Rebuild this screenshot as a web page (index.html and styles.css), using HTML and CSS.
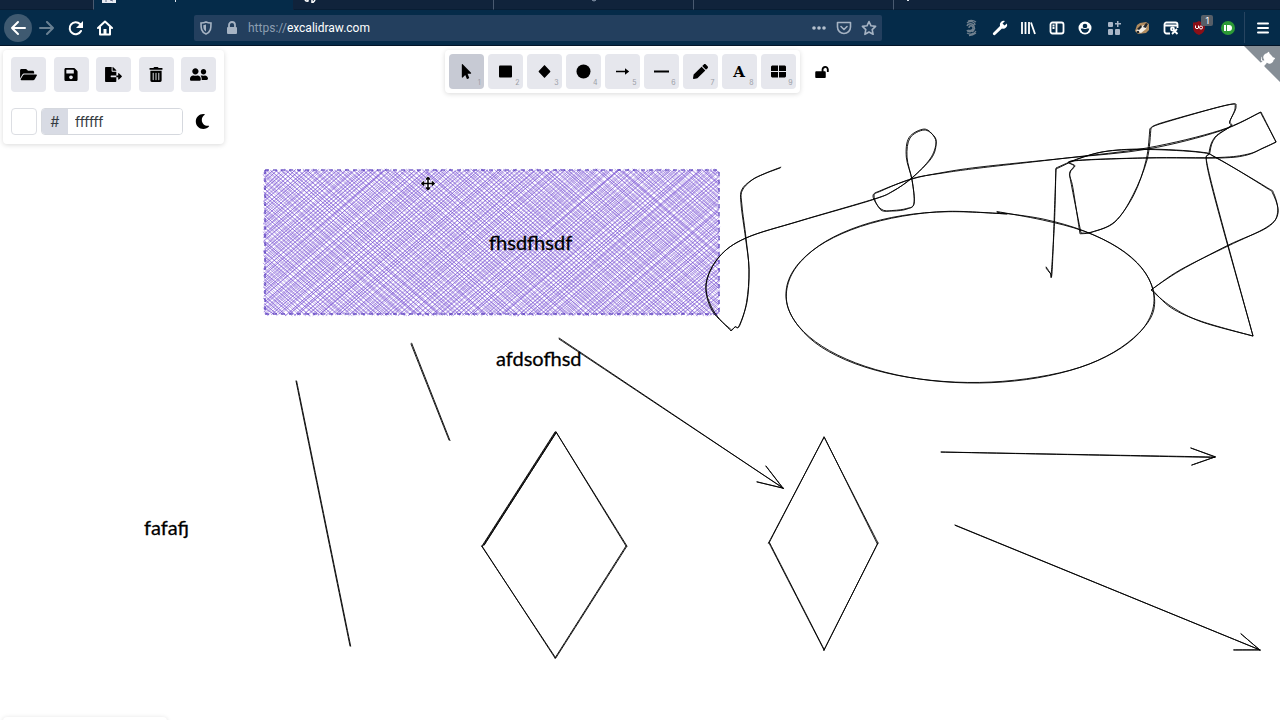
FILE: index.html
```
<!DOCTYPE html>
<html lang="en">
<head>
    <meta charset="UTF-8">
    <meta name="viewport" content="width=device-width, initial-scale=1.0">
    <title>Excalidraw</title>
    <link rel="stylesheet" href="styles.css">
</head>
<body>

<div class="browser">
    <div class="tabs">
        <div class="tab tab-first"></div>
        <div class="tab tab-active">
            <svg class="favicon" width="16" height="3" viewBox="0 0 16 3"><path fill="#e8ebf2" d="M1 0h14v3H1z"/><path stroke="#66708a" d="M4 1h2M9 0l3 1"/></svg>
            <svg class="tab-mark" width="2" height="3" viewBox="0 0 2 3"><path fill="#dfe6ee" d="M0 0h1v2H0z"/></svg>
        </div>
        <div class="tab"><svg class="tab-icon" width="14" height="3" viewBox="0 0 14 3"><path d="M2 0q1 1.500 3 1V0M9 0v3q2-1 3-3" fill="none" stroke="#fff" stroke-width="1.500"/></svg></div>
        <div class="tab tab-dot"><svg width="6" height="3" viewBox="0 0 6 3"><path d="M1 0q2 2 4 0" fill="none" stroke="#8fa0b5" stroke-width="1"/></svg></div>
        <div class="tab"></div>
        <div class="tab tab-last"><svg class="tab-icon" width="6" height="3" viewBox="0 0 6 3"><path fill="#dfe6ee" d="M4 0h2v1H4z"/></svg></div>
    </div>
    <nav class="navbar">
        <div class="nav-buttons">
            <button class="nav-button back" aria-label="Back"><svg width="16" height="16" viewBox="0 0 16 16"><path d="M15 8H2M8 2L2 8l6 6"/></svg></button>
            <button class="nav-button forward" aria-label="Forward"><svg width="16" height="16" viewBox="0 0 16 16"><path d="M1 8h13M8 2l6 6-6 6"/></svg></button>
            <button class="nav-button" aria-label="Reload"><svg width="16" height="16" viewBox="0 0 16 16"><path d="M13 11A6 6 0 1 1 12 4l1 1"/><path class="solid" d="M15 1v7H8z"/></svg></button>
            <button class="nav-button" aria-label="Home"><svg width="16" height="16" viewBox="0 0 16 16"><path d="M1 8l7-6.500L15 8M3 7v7.500h10V7"/><path class="solid" d="M6.500 9h3v5h-3z"/></svg></button>
        </div>
        <div class="address">
            <svg width="14" height="14" viewBox="0 0 14 14"><path d="M7 1C5 2 3 2 2 2c0 5 0 9 5 11 5-2 5-6 5-11-1 0-3 0-5-1z" fill="none" stroke="#a6b3c3" stroke-width="1.600"/><path d="M7 3.500v7C4.500 9 4.300 7 4.300 4.200z" fill="#a6b3c3"/></svg>
            <svg width="14" height="14" viewBox="0 0 14 14"><path d="M4 6V4a3 3 0 0 1 6 0v2" fill="none" stroke="#a6b3c3" stroke-width="1.800"/><rect x="2" y="6" width="10" height="7" rx="1" fill="#a6b3c3"/></svg>
            <span class="url"><span class="scheme">https://</span>excalidraw.com</span>
            <svg width="16" height="16" viewBox="0 0 16 16" fill="#b4c0ce"><circle cx="3" cy="8" r="1.800"/><circle cx="8" cy="8" r="1.800"/><circle cx="13" cy="8" r="1.800"/></svg>
            <svg width="16" height="16" viewBox="0 0 16 16" fill="none" stroke="#a6b3c3" stroke-width="1.600" stroke-linejoin="round"><path d="M1.500 2.500h13V7a6.500 6.500 0 0 1-13 0z"/><path d="M5 6.500l3 3 3-3" stroke-linecap="round"/></svg>
            <svg width="16" height="16" viewBox="0 0 16 16" fill="none" stroke="#a6b3c3" stroke-width="1.600" stroke-linejoin="round"><path d="M8 1.500l2 4.300 4.600.600-3.400 3.200.900 4.700L8 12l-4.100 2.300.900-4.700L1.400 6.400 6 5.800z"/></svg>
        </div>
        <div class="extensions">
            <svg viewBox="0 0 20 20" fill="none" stroke="#71818f" stroke-width="1.300"><path d="M6 5c3-3 8-1 8 2M6 8c1-3 6-3 7 0s0 5-2 6M8 10c0-3 4-3 4 0 0 2-3 3-5 2M6 12c1 3 6 2 8-2M6 15c3 2 7 1 9-2M8 17.500c3 0 5-1 7-2.500M7 3c3-1 6-.5 8 1"/></svg>
            <svg viewBox="0 0 20 20"><path fill="#fff" d="M3 15l7-7a4 4 0 0 1 5-5l-2.500 2.500 2 2L17 5.500a4 4 0 0 1-5 5l-7 6.500a1.500 1.500 0 0 1-2-2z"/></svg>
            <svg viewBox="0 0 20 20" stroke="#fff" stroke-width="1.800"><path d="M4 4v12M7.500 4v12M11 4v12M13 4.500l4 11.500"/></svg>
            <svg viewBox="0 0 20 20" fill="none" stroke="#fff" stroke-width="1.800"><rect x="3.500" y="4.500" width="13" height="11" rx="2"/><path d="M9.500 4.500v11M5.500 7.500h2M5.500 10h2"/></svg>
            <svg viewBox="0 0 20 20"><circle cx="10" cy="10" r="6.500" fill="#fff"/><circle cx="10" cy="8" r="2.300" fill="#052b49"/><path d="M5.800 10.500h8.400a4.200 4.200 0 0 1-8.400 0z" fill="#052b49"/><path d="M8 10a2.600 2.600 0 0 0 4 0" fill="#fff"/></svg>
            <svg viewBox="0 0 20 20" fill="#a9b6c7"><rect x="4" y="4" width="5" height="5" rx="1"/><rect x="4" y="11" width="5" height="6" rx="1"/><rect x="11" y="11" width="5" height="6" rx="1"/><path d="M13 3h1.500v2H17v1.500h-2.500V9H13V6.500h-2V5h2z"/></svg>
            <svg viewBox="0 0 20 20"><path fill="#b08b5f" d="M3 13l2-6 3-2 6-1 3 2v6l-3 3-8 1z"/><path fill="#f4efe6" d="M4 13l5-5 7-2-2 5-5 4z"/><path d="M5 11l4-4 1 2-3 3zM11 9l3-4 2 1-2 4z" fill="#20242a"/><circle cx="6" cy="14" r="1.200" fill="#20242a"/></svg>
            <svg viewBox="0 0 20 20" fill="none" stroke="#fff" stroke-width="1.800"><path d="M9 15.500H5.500a2 2 0 0 1-2-2v-7a2 2 0 0 1 2-2h9a2 2 0 0 1 2 2V10M3.500 7.500h13"/><circle cx="11.500" cy="11" r="1.500"/><path d="M12.500 12l4 4M11 16l5-5"/></svg>
            <span class="blocker">
                <svg viewBox="0 0 20 20"><path fill="#8b0f17" d="M10 3c-2 1.500-4 1.500-6 1.500V9c0 4 2 6.500 6 8 4-1.500 6-4 6-8V4.500C14 4.500 12 4.500 10 3z"/><path d="M6.500 7.500v2.500q1.500 1.500 3 0V7.500" fill="none" stroke="#fff"/><circle cx="12" cy="9.500" r="1.500" fill="none" stroke="#fff"/></svg>
                <span class="badge">1</span>
            </span>
            <svg viewBox="0 0 20 20"><circle cx="10" cy="10" r="7" fill="#2c9a36"/><path fill="#fff" d="M6 7h2v6H6zM9 7h2a3 3 0 0 1 0 6H9z"/></svg>
        </div>
        <div class="divider"></div>
        <button class="nav-button menu" aria-label="Menu"><svg width="16" height="16" viewBox="0 0 16 16"><path d="M3 3.500h10M3 8h10M3 12.500h10"/></svg></button>
    </nav>
</div>

<main class="app">
    <svg class="canvas" aria-label="Drawing canvas">
        <g id="hatch" class="hatch"></g>
        <rect class="selection" x="265" y="124" width="454" height="144"/>
        <g id="strokes" class="strokes"></g>
        <g class="labels">
            <text x="489" y="204">fhsdfhsdf</text>
            <text x="496" y="320">afdsofhsd</text>
            <text x="144" y="489">fafafj</text>
        </g>
        <g class="move-cursor">
            <path class="cursor-edge" d="M428 132v11M422.500 137.500h11"/>
            <path d="M428 132v11M422.500 137.500h11M426 133.500l2-2 2 2M426 141.500l2 2 2-2M424 135.500l-2 2 2 2M432 135.500l2 2-2 2"/>
        </g>
    </svg>

    <div class="top-bar">
        <section class="island actions">
            <div class="action-row">
                <button class="tool" aria-label="Load"><svg width="17" height="15" viewBox="0 0 576 512"><path d="M572.694 292.093L500.270 416.248A63.997 63.997 0 0 1 444.989 448H45.025c-18.523 0-30.064-20.093-20.731-36.093l72.424-124.155A64 64 0 0 1 152 256h399.964c18.523 0 30.064 20.093 20.730 36.093zM152 224h328v-48c0-26.510-21.490-48-48-48H272l-64-64H48C21.490 64 0 85.490 0 112v278.046l69.077-118.418C86.214 242.250 117.989 224 152 224z"/></svg></button>
                <button class="tool" aria-label="Save"><svg width="14" height="15" viewBox="0 0 448 512"><path d="M433.941 129.941l-83.882-83.882A48 48 0 0 0 316.118 32H48C21.490 32 0 53.490 0 80v352c0 26.510 21.490 48 48 48h352c26.510 0 48-21.490 48-48V163.882a48 48 0 0 0-14.059-33.941zM224 416c-35.346 0-64-28.654-64-64 0-35.346 28.654-64 64-64s64 28.654 64 64c0 35.346-28.654 64-64 64zm96-304.520V212c0 6.627-5.373 12-12 12H76c-6.627 0-12-5.373-12-12V108c0-6.627 5.373-12 12-12h228.520c3.183 0 6.235 1.264 8.485 3.515l3.480 3.480A11.996 11.996 0 0 1 320 111.480z"/></svg></button>
                <button class="tool" aria-label="Export"><svg width="17" height="15" viewBox="0 0 576 512"><path d="M384 121.900c0-6.300-2.500-12.400-7-16.900L279.100 7c-4.500-4.500-10.600-7-17-7H256v128h128zM571 308l-95.700-96.400c-10.100-10.100-27.400-3-27.400 11.300V288h-64v64h64v65.200c0 14.300 17.300 21.400 27.400 11.300L571 332c6.600-6.600 6.600-17.400 0-24zm-379 28v-32c0-8.800 7.200-16 16-16h176V160H248c-13.200 0-24-10.800-24-24V0H24C10.700 0 0 10.700 0 24v464c0 13.300 10.700 24 24 24h336c13.300 0 24-10.700 24-24V352H208c-8.800 0-16-7.200-16-16z"/></svg></button>
                <button class="tool" aria-label="Reset the canvas"><svg width="14" height="15" viewBox="0 0 448 512"><path d="M32 464a48 48 0 0 0 48 48h288a48 48 0 0 0 48-48V128H32zm272-256a16 16 0 0 1 32 0v224a16 16 0 0 1-32 0zm-96 0a16 16 0 0 1 32 0v224a16 16 0 0 1-32 0zm-96 0a16 16 0 0 1 32 0v224a16 16 0 0 1-32 0zM432 32H312l-9.400-18.700A24 24 0 0 0 281.100 0H166.800a23.720 23.720 0 0 0-21.400 13.300L136 32H16A16 16 0 0 0 0 48v32a16 16 0 0 0 16 16h416a16 16 0 0 0 16-16V48a16 16 0 0 0-16-16z"/></svg></button>
                <button class="tool" aria-label="Live collaboration"><svg width="18" height="15" viewBox="0 0 640 512"><path d="M192 256c61.900 0 112-50.100 112-112S253.900 32 192 32 80 82.100 80 144s50.100 112 112 112zm76.800 32h-8.300c-20.800 10-43.900 16-68.500 16s-47.600-6-68.500-16h-8.300C51.600 288 0 339.600 0 403.200V432c0 26.500 21.500 48 48 48h288c26.500 0 48-21.500 48-48v-28.800c0-63.600-51.600-115.200-115.200-115.200zM480 256c53 0 96-43 96-96s-43-96-96-96-96 43-96 96 43 96 96 96zm48 32h-3.800c-13.900 4.800-28.600 8-44.200 8s-30.300-3.200-44.200-8H432c-20.400 0-39.200 5.900-55.700 15.400 24.400 26.300 39.700 61.200 39.700 99.800v38.400c0 2.200-.5 4.300-.6 6.400H592c26.500 0 48-21.500 48-48 0-61.900-50.100-112-112-112z"/></svg></button>
            </div>
            <div class="color-row">
                <button class="swatch" aria-label="Canvas background"></button>
                <div class="color-field">
                    <label for="background">#</label>
                    <input id="background" type="text" value="ffffff" spellcheck="false">
                </div>
                <button class="theme" aria-label="Dark mode"><svg width="15" height="15" viewBox="0 0 512 512"><path d="M283.211 512c78.962 0 151.079-35.925 198.857-94.792 7.068-8.708-.639-21.430-11.562-19.350-124.203 23.654-238.262-71.576-238.262-196.954 0-72.222 38.662-138.635 101.498-174.394 9.686-5.512 7.250-20.197-3.756-22.230A258.156 258.156 0 0 0 283.211 0c-141.309 0-256 114.511-256 256 0 141.309 114.511 256 256 256z"/></svg></button>
            </div>
        </section>

        <section class="shapes">
            <div class="island toolbar">
                <button class="tool selected" aria-label="Selection"><svg width="15" height="15" viewBox="0 0 320 512"><path d="M302.189 329.126H196.105l55.831 135.993c3.889 9.428-.555 19.999-9.444 23.999l-49.165 21.427c-9.165 4-19.443-.571-23.332-9.714l-53.053-129.136-86.664 89.138C18.729 472.710 0 463.554 0 447.977V18.299C0 1.899 19.921-6.096 30.277 5.443l284.412 292.542c11.472 11.179 3.007 31.141-12.500 31.141z"/></svg><span class="key">1</span></button>
                <button class="tool" aria-label="Rectangle"><svg width="15" height="15" viewBox="0 0 15 15"><rect x="1" y="1.500" width="13" height="12" rx="1"/></svg><span class="key">2</span></button>
                <button class="tool" aria-label="Diamond"><svg width="15" height="15" viewBox="0 0 15 15"><path d="M7 1.400q.5-.6 1 0l5.200 5.600q.4.500 0 1L8 13.600q-.5.6-1 0L1.800 8q-.4-.5 0-1z"/></svg><span class="key">3</span></button>
                <button class="tool" aria-label="Ellipse"><svg width="15" height="15" viewBox="0 0 15 15"><circle cx="7.500" cy="7.500" r="7"/></svg><span class="key">4</span></button>
                <button class="tool" aria-label="Arrow"><svg width="15" height="15" viewBox="0 0 15 15"><path d="M1 6.700h9V4.300l4.200 3.200L10 10.700V8.300H1z"/></svg><span class="key">5</span></button>
                <button class="tool" aria-label="Line"><svg width="15" height="15" viewBox="0 0 15 15"><path d="M0 6.500h15v2H0z"/></svg><span class="key">6</span></button>
                <button class="tool" aria-label="Draw"><svg width="15" height="15" viewBox="0 0 512 512"><path d="M497.900 142.100l-46.100 46.100c-4.700 4.700-12.300 4.700-17 0l-111-111c-4.700-4.700-4.700-12.300 0-17l46.100-46.100c18.700-18.700 49.100-18.700 67.900 0l60.100 60.100c18.800 18.700 18.800 49.100 0 67.900zM284.200 99.800L21.600 362.400.4 483.900c-2.900 16.400 11.400 30.600 27.800 27.800l121.500-21.300 262.600-262.600c4.700-4.700 4.700-12.300 0-17l-111-111c-4.800-4.700-12.400-4.700-17.100 0z"/></svg><span class="key">7</span></button>
                <button class="tool" aria-label="Text"><span class="letter">A</span><span class="key">8</span></button>
                <button class="tool" aria-label="Library"><svg width="15" height="15" viewBox="0 0 15 15"><path d="M1 1.500h6V7H0V2.500zM8 1.500h6l1 1V7H8zM0 8h7v5.500H1l-1-1zM8 8h7v4.500l-1 1H8z"/></svg><span class="key">9</span></button>
            </div>
            <button class="lock" aria-label="Keep selected tool active"><svg width="14" height="12" viewBox="0 0 576 512"><path d="M423.500 0C339.500.3 272 69.500 272 153.500V224H48c-26.500 0-48 21.500-48 48v192c0 26.500 21.500 48 48 48h352c26.500 0 48-21.500 48-48V272c0-26.500-21.500-48-48-48h-48v-71.100c0-39.600 31.700-72.500 71.300-72.900 40-.4 72.700 32.100 72.700 72v80c0 13.300 10.700 24 24 24h32c13.300 0 24-10.700 24-24v-80C576 68 507.500-.3 423.500 0z"/></svg></button>
        </section>
    </div>

    <a class="github" href="#" aria-label="GitHub repository">
        <svg width="36" height="36" viewBox="0 0 250 250">
            <path fill="#868e96" d="M0 0l115 115h15l12 27 108 108V0z"/>
            <path fill="#fff" d="M128.300 109C113.800 99.700 119 89.600 119 89.600c3-6.900 1.500-11 1.500-11-1.300-6.600 2.900-2.300 2.900-2.300 3.900 4.600 2.100 11 2.100 11-2.600 10.300 5.100 14.600 8.900 15.900z"/>
            <path fill="#fff" d="M115 115c-.1.100 3.700 1.500 4.800.4l13.900-13.800c3.200-2.400 6.200-3.200 8.500-3-8.400-10.600-14.700-24.200 1.600-40.600 4.700-4.600 10.200-6.800 15.900-7 .6-1.600 3.500-7.400 11.700-10.900 0 0 4.700 2.400 7.400 16.100 4.300 2.400 8.400 5.600 12.100 9.200 3.600 3.600 6.800 7.800 9.200 12.200 13.700 2.600 16.200 7.300 16.200 7.300-3.600 8.200-9.400 11.100-10.900 11.700-.3 5.800-2.400 11.200-7.100 15.900-16.400 16.400-30 10-40.600 1.600.2 2.800-1 6.800-5 10.800L141 136.500c-1.200 1.200.6 5.400.8 5.300z"/>
        </svg>
    </a>

    <div class="bottom-bar"><div class="island zoom-panel"></div></div>
</main>

<script src="script.js"></script>
</body>
</html>
```

FILE: styles.css
```
* {
    box-sizing: border-box;
}
body {
    font-family: Inter, "Liberation Sans", sans-serif;
    margin: 0;
    height: 100vh;
    display: flex;
    flex-direction: column;
    overflow: hidden;
    background-color: #fff;
}
button {
    border: none;
    padding: 0;
    font-family: inherit;
    cursor: pointer;
    color: #000;
}

/* browser window */
.browser {
    background-color: #052b49;
    border-bottom: 1px solid #021428;
}
.tabs {
    display: flex;
    height: 10px;
}
.tab {
    position: relative;
    display: flex;
    width: 200px;
    background-color: #10233b;
    border-right: 1px solid #4a5a70;
    border-bottom: 1px solid #081d33;
}
.tab-first {
    width: 94px;
}
.tab-active {
    background-color: #052b49;
    border-right-color: #10233b;
    border-bottom: none;
}
.tab-last {
    flex: 1;
    border-right: none;
}
.favicon {
    margin-left: 7px;
}
.tab-mark {
    margin-left: 58px;
}
.tab-icon {
    margin-left: 9px;
}
.tab-dot {
    justify-content: center;
}
.navbar {
    display: flex;
    align-items: center;
    height: 35px;
    padding: 0 3px 0 4px;
}
.nav-buttons {
    display: flex;
    margin-right: 74px;
}
.nav-button {
    display: flex;
    align-items: center;
    justify-content: center;
    width: 28px;
    height: 28px;
    margin-right: 1px;
    border-radius: 50%;
    background: none;
}
.nav-button svg {
    fill: none;
    stroke: #fff;
    stroke-width: 2;
    stroke-linecap: round;
    stroke-linejoin: round;
}
.nav-button .solid {
    fill: #fff;
    stroke: none;
}
.back {
    background-color: #3f5a71;
}
.forward svg {
    opacity: 0.4;
}
.address {
    display: flex;
    flex: 1;
    align-items: center;
    height: 26px;
    padding: 0 5px;
    gap: 9px;
    border-radius: 2px;
    background-color: #233f5e;
}
.address svg:first-child {
    margin-right: 3px;
}
.url {
    flex: 1;
    font-family: Roboto, sans-serif;
    font-size: 12px;
    color: #fff;
}
.scheme {
    color: #8c9db0;
}
.extensions {
    display: flex;
    justify-content: space-between;
    width: 277px;
    margin-left: 79px;
}
.extensions svg {
    display: block;
    width: 20px;
    height: 20px;
}
.blocker {
    position: relative;
}
.badge {
    position: absolute;
    top: -3px;
    right: -4px;
    width: 12px;
    height: 11px;
    border-radius: 2px;
    background-color: #565e67;
    color: #fff;
    font-size: 9px;
    line-height: 11px;
    text-align: center;
}
.divider {
    width: 1px;
    height: 31px;
    margin: 0 4px 0 6px;
    background-color: #274460;
}
.menu {
    margin-right: 0;
}

/* drawing app */
.app {
    position: relative;
    display: flex;
    flex: 1;
    flex-direction: column;
    justify-content: space-between;
    overflow: hidden;
}
.canvas {
    position: absolute;
    inset: 0;
    width: 100%;
    height: 100%;
}
.strokes {
    fill: none;
    stroke: #000;
    stroke-width: 0.9;
    stroke-linecap: round;
    stroke-linejoin: round;
}
.hatch {
    fill: none;
    stroke: #6a3fd0;
    stroke-width: 0.42;
}
.selection {
    fill: none;
    stroke: #3a1cb0;
    stroke-width: 1;
    stroke-dasharray: 4 4;
}
.labels {
    font-family: Lato, sans-serif;
    font-size: 20px;
    stroke: #000;
    stroke-width: 0.3;
}
.move-cursor {
    fill: none;
    stroke: #000;
    stroke-width: 1.5;
}
.move-cursor .cursor-edge {
    stroke: #fff;
    stroke-width: 4;
}
.top-bar {
    position: relative;
    display: grid;
    grid-template-columns: 1fr auto 1fr;
    align-items: start;
    padding: 4px 3px;
}
.island {
    border-radius: 4px;
    background-color: #fff;
    box-shadow: 0 1px 5px rgba(0, 0, 0, 0.15);
}
.actions {
    justify-self: start;
    width: 221px;
    padding: 7px 8px 9px;
}
.action-row {
    display: flex;
    justify-content: space-between;
}
.tool {
    position: relative;
    display: flex;
    align-items: center;
    justify-content: center;
    width: 35px;
    height: 35px;
    border-radius: 4px;
    background-color: #e6e7ed;
}
.tool.selected {
    background-color: #c7cad4;
}
.key {
    position: absolute;
    right: 3px;
    bottom: 2px;
    font-size: 7px;
    line-height: 8px;
    color: #9a9da6;
}
.letter {
    font-family: "DejaVu Serif", serif;
    font-size: 15px;
    font-weight: bold;
}
.color-row {
    display: flex;
    align-items: center;
    margin-top: 16px;
}
.swatch {
    width: 26px;
    height: 27px;
    margin-right: 4px;
    border: 1px solid #dcdee3;
    border-radius: 4px;
    background-color: #fff;
}
.color-field {
    display: flex;
    width: 142px;
    height: 27px;
    border: 1px solid #d5d8de;
    border-radius: 4px;
    overflow: hidden;
}
.color-field label {
    width: 26px;
    background-color: #d8dbe4;
    color: #343a40;
    font-size: 14px;
    line-height: 25px;
    text-align: center;
}
.color-field input {
    flex: 1;
    min-width: 0;
    border: none;
    padding: 0 7px;
    color: #343a40;
    font-family: inherit;
    font-size: 14px;
    outline: none;
}
.theme {
    display: flex;
    margin-left: 12px;
    background: none;
}
.shapes {
    display: flex;
    align-items: center;
    gap: 8px;
}
.toolbar {
    display: flex;
    gap: 4px;
    padding: 4px;
}
.lock {
    display: flex;
    justify-content: center;
    width: 28px;
    background: none;
}
.github {
    position: absolute;
    top: 0;
    right: 0;
}
.github svg {
    display: block;
}
.bottom-bar {
    position: relative;
    height: 3px;
    padding: 0 3px;
}
.zoom-panel {
    width: 164px;
    height: 40px;
}
```

FILE: script.js
```
const SVG_NS = "http://www.w3.org/2000/svg";
const strokes = document.getElementById("strokes");
const hatch = document.getElementById("hatch");

// Seeded random so the sketch is the same on each load
let seed = 7;
function random() {
    seed = (seed * 16807) % 2147483647;
    return seed / 2147483647;
}
function jitter(amount) {
    return (random() - 0.5) * 2 * amount;
}

function addPath(parent, d) {
    const path = document.createElementNS(SVG_NS, "path");
    path.setAttribute("d", d);
    parent.appendChild(path);
}

function same(a, b) {
    return a[0] === b[0] && a[1] === b[1];
}

// Smooth curve through the points; a point written twice makes a corner
function curve(points) {
    let d = `M${points[0]}`;
    for (let i = 0; i < points.length - 1; i++) {
        const p0 = points[i - 1] || points[i];
        const p1 = points[i];
        const p2 = points[i + 1];
        const p3 = points[i + 2] || p2;
        if (same(p1, p2)) continue;
        d += `C${p1[0] + (p2[0] - p0[0]) / 6},${p1[1] + (p2[1] - p0[1]) / 6}`;
        d += ` ${p2[0] - (p3[0] - p1[0]) / 6},${p2[1] - (p3[1] - p1[1]) / 6} ${p2}`;
    }
    return d;
}

// Every shape is drawn twice, the second time a little off
function sketch(points, amount = 0.6) {
    const second = [];
    points.forEach((point, i) => {
        if (i > 0 && same(point, points[i - 1])) {
            second.push(second[i - 1]);
        } else {
            second.push([point[0] + jitter(amount), point[1] + jitter(amount)]);
        }
    });
    addPath(strokes, curve(points));
    addPath(strokes, curve(second));
}

function line(x1, y1, x2, y2, amount) {
    sketch([[x1, y1], [x2, y2]], amount);
}

// Cross hatching of the selected rectangle
function hatchFill(x, y, w, h, angle, gap) {
    const dx = Math.cos(angle), dy = Math.sin(angle);
    const cx = x + w / 2, cy = y + h / 2;
    const reach = (w + h) / 2;
    for (let o = -reach; o < reach; o += gap) {
        const px = cx - dy * o, py = cy + dx * o;
        const tx = [(x - px) / dx, (x + w - px) / dx].sort((a, b) => a - b);
        const ty = [(y - py) / dy, (y + h - py) / dy].sort((a, b) => a - b);
        const from = Math.max(tx[0], ty[0]), to = Math.min(tx[1], ty[1]);
        if (from >= to) continue;
        for (let pass = 0; pass < 2; pass++) {
            const x1 = px + dx * from + jitter(1.2), y1 = py + dy * from + jitter(1.2);
            const x2 = px + dx * to + jitter(1.2), y2 = py + dy * to + jitter(1.2);
            addPath(hatch, `M${x1},${y1}L${x2},${y2}`);
        }
    }
}
hatchFill(264, 124, 455, 145, -41 * Math.PI / 180, 3);
hatchFill(264, 124, 455, 145, 41 * Math.PI / 180, 3);

// Free drawing
sketch([
    [780, 122], [764, 128], [752, 134], [742, 145], [742, 160], [746, 192], [749, 224], [747, 256],
    [739, 280], [735, 281], [731, 285], [731, 285], [713, 264], [706, 238], [719, 211], [746, 192],
    [800, 175], [872, 154], [893, 145], [912, 132], [930, 113], [936, 98], [934, 90], [924, 84],
    [910, 92], [907, 111], [912, 134], [914, 157], [907, 163], [893, 165], [881, 163], [873, 150],
    [882, 144], [912, 133], [940, 127], [980, 121], [1067, 112], [1148, 103], [1220, 85],
    [1261, 66], [1261, 66], [1276, 96], [1276, 96], [1263, 102], [1247, 109], [1220, 112],
    [1147, 112], [1073, 115], [1075, 120], [1070, 127], [1072, 142], [1081, 187], [1081, 187],
    [1092, 186], [1115, 176], [1133, 149], [1147, 114], [1151, 82], [1151, 82], [1163, 77],
    [1227, 59], [1236, 61], [1230, 75], [1231, 80], [1215, 91], [1209, 107], [1210, 131],
    [1253, 290], [1253, 290], [1202, 276], [1172, 261], [1151, 244], [1151, 244], [1180, 224],
    [1228, 200], [1267, 181], [1278, 167], [1273, 148], [1265, 141], [1217, 112], [1200, 106],
    [1148, 103], [1108, 105], [1080, 112], [1056, 122], [1056, 122], [1054, 177], [1052, 227],
    [1050, 227], [1046, 222]
], 1.1);

// Ellipse
const ring = [];
for (let a = -80; a <= 270; a += 15) {
    const t = a * Math.PI / 180;
    ring.push([970 + 184 * Math.cos(t) + 5 * Math.sin(t), 251 + 86 * Math.sin(t)]);
}
ring.push([1007, 168]);
sketch(ring, 1);

// Diamonds
line(556, 386, 626, 500, 1.2);
line(626, 500, 555, 612, 1);
line(555, 612, 482, 500, 0.5);
line(482, 500, 555, 386, 1);
line(484, 499, 556, 387, 0.3);
line(824, 391, 878, 497, 0.8);
line(878, 497, 824, 604, 0.8);
line(824, 604, 769, 497, 0.8);
line(769, 497, 824, 391, 0.8);

// Lines
line(296, 335, 350, 600, 0.8);
line(411, 298, 449, 394, 1);

// Arrows
line(559, 293, 783, 442, 1);
line(766, 420, 783, 442, 0.3);
line(757, 436, 783, 442, 0.3);
line(941, 406, 1215, 411);
line(1191, 402, 1215, 411, 0.3);
line(1192, 419, 1215, 411, 0.3);
line(955, 479, 1260, 604);
line(1241, 588, 1260, 604, 0.3);
line(1234, 604, 1260, 604, 0.3);
```
